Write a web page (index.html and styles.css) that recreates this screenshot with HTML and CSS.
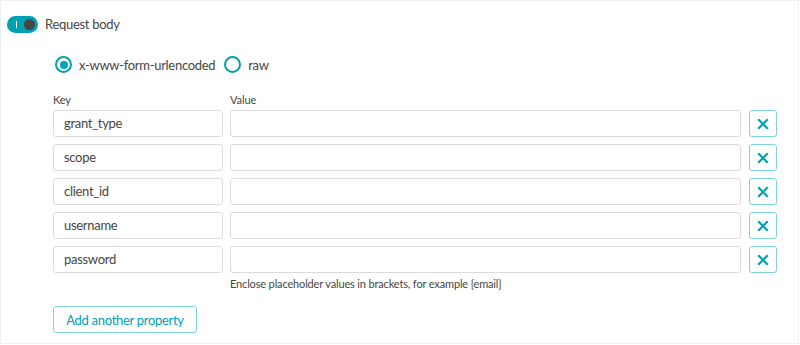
FILE: index.html
```html
<!DOCTYPE html>
<html>
<head>
<meta charset="utf-8">
<link rel="stylesheet" href="styles.css">
</head>
<body>
<div class="card">
  <div class="header">
    <span class="toggle"><span class="toggle-bar"></span><span class="toggle-knob"></span></span>
    <span class="header-label">Request body</span>
  </div>
  <div class="content">
    <div class="radios">
      <label class="radio"><span class="radio-circle checked"></span><span class="radio-text">x-www-form-urlencoded</span></label>
      <label class="radio"><span class="radio-circle"></span><span class="radio-text">raw</span></label>
    </div>
    <div class="labels">
      <span class="col-key">Key</span>
      <span class="col-value">Value</span>
    </div>
    <div class="rows">
      <div class="row">
        <div class="input key">grant_type</div>
        <div class="input value"></div>
        <button class="remove"><svg viewBox="0 0 12 12" width="12" height="12"><path d="M2 2 L10 10 M10 2 L2 10" stroke="#00a1b2" stroke-width="2.2" stroke-linecap="square"/></svg></button>
      </div>
      <div class="row">
        <div class="input key">scope</div>
        <div class="input value"></div>
        <button class="remove"><svg viewBox="0 0 12 12" width="12" height="12"><path d="M2 2 L10 10 M10 2 L2 10" stroke="#00a1b2" stroke-width="2.2" stroke-linecap="square"/></svg></button>
      </div>
      <div class="row">
        <div class="input key">client_id</div>
        <div class="input value"></div>
        <button class="remove"><svg viewBox="0 0 12 12" width="12" height="12"><path d="M2 2 L10 10 M10 2 L2 10" stroke="#00a1b2" stroke-width="2.2" stroke-linecap="square"/></svg></button>
      </div>
      <div class="row">
        <div class="input key">username</div>
        <div class="input value"></div>
        <button class="remove"><svg viewBox="0 0 12 12" width="12" height="12"><path d="M2 2 L10 10 M10 2 L2 10" stroke="#00a1b2" stroke-width="2.2" stroke-linecap="square"/></svg></button>
      </div>
      <div class="row">
        <div class="input key">password</div>
        <div class="value-wrap">
          <div class="input value"></div>
          <div class="hint">Enclose placeholder values in brackets, for example {email}</div>
        </div>
        <button class="remove"><svg viewBox="0 0 12 12" width="12" height="12"><path d="M2 2 L10 10 M10 2 L2 10" stroke="#00a1b2" stroke-width="2.2" stroke-linecap="square"/></svg></button>
      </div>
    </div>
    <button class="add">Add another property</button>
  </div>
</div>
</body>
</html>
```
FILE: styles.css
```css
* { box-sizing: border-box; }
html, body { margin: 0; padding: 0; background: #fff; }
body {
  font-family: Lato, "Open Sans", sans-serif;
  color: #454646;
  font-size: 13px;
  letter-spacing: -0.3px;
}
.card {
  width: 799px;
  height: 344px;
  border: 1px solid #efefef;
  padding: 14px 0 0 6px;
}
.header {
  display: flex;
  align-items: center;
  height: 18px;
}
.toggle {
  position: relative;
  width: 31px;
  height: 17px;
  border-radius: 9px;
  background: #00a1b2;
  display: inline-block;
}
.toggle-bar {
  position: absolute;
  left: 9px;
  top: 5px;
  width: 1px;
  height: 7px;
  background: #fff;
}
.toggle-knob {
  position: absolute;
  right: 3px;
  top: 3px;
  width: 11px;
  height: 11px;
  border-radius: 50%;
  background: #454646;
}
.header-label {
  margin-left: 7px;
}
.content {
  padding-left: 46px;
}
.radios {
  display: flex;
  align-items: center;
  margin-top: 23px;
  height: 17px;
}
.radio {
  display: flex;
  align-items: center;
  height: 17px;
  margin-right: 7px;
}
.radio-circle {
  width: 17px;
  height: 17px;
  border: 2px solid #00a1b2;
  border-radius: 50%;
  position: relative;
  margin-left: 2px;
}
.radio-circle.checked::after {
  content: "";
  position: absolute;
  left: 2.5px;
  top: 2.5px;
  width: 8px;
  height: 8px;
  border-radius: 50%;
  background: #00a1b2;
}
.radio-text {
  margin-left: 7px;
}
.labels {
  display: flex;
  margin-top: 19px;
  font-size: 11px;
  letter-spacing: -0.1px;
  height: 15px;
  line-height: 15px;
}
.col-key { width: 177px; }
.rows {
  margin-top: 3px;
  display: flex;
  flex-direction: column;
  gap: 7px;
}
.row {
  display: flex;
  align-items: flex-start;
}
.input {
  height: 27px;
  border: 1px solid #dcdcdc;
  border-radius: 3px;
  padding: 0 10px;
  line-height: 25px;
}
.key { width: 170px; margin-right: 7px; }
.value { width: 511px; }
.value-wrap { width: 511px; }
.hint {
  font-size: 11px;
  letter-spacing: -0.15px;
  margin-top: 3px;
  line-height: 15px;
}
.remove {
  width: 28px;
  height: 27px;
  margin-left: 8px;
  border: 1px solid #7fd3dc;
  border-radius: 3px;
  background: #fff;
  padding: 0;
  display: flex;
  align-items: center;
  justify-content: center;
}
.add {
  margin-top: 15px;
  height: 27px;
  width: 144px;
  border: 1px solid #7fd3dc;
  border-radius: 3px;
  background: #fff;
  color: #00a1b2;
  font-family: Lato, "Open Sans", sans-serif;
  font-size: 13px;
  letter-spacing: -0.3px;
  padding: 0;
}
```
